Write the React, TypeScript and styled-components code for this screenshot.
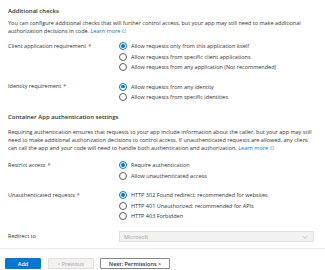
import React from 'react';
import styled, { createGlobalStyle } from 'styled-components';

const GlobalStyle = createGlobalStyle`
  html, body {
    margin: 0;
    padding: 0;
    background: #ffffff;
  }
  body {
    font-family: "Segoe UI", "Open Sans", "Noto Sans", sans-serif;
    font-size: 5.5px;
    color: #323130;
  }
`;

const Page = styled.div`
  width: 325px;
  height: 270px;
  display: flex;
  flex-direction: column;
  overflow: hidden;
`;

const Content = styled.div`
  flex: 1;
  padding: 6px 11px 0 8px;
`;

const SectionTitle = styled.h2<{ $gap?: number }>`
  margin: ${p => p.$gap ?? 0}px 0 0;
  font-size: 6px;
  font-weight: 600;
  line-height: 10px;
`;

const Description = styled.p<{ $top: number; $bottom: number }>`
  margin: ${p => p.$top}px 0 ${p => p.$bottom}px;
  line-height: 8px;
`;

const LearnMore = styled.a`
  color: #0078d4;
  text-decoration: none;
  white-space: nowrap;
`;

const FieldRow = styled.div<{ $gap?: number }>`
  display: grid;
  grid-template-columns: 111px 1fr;
  align-items: start;
  margin-top: ${p => p.$gap ?? 0}px;
`;

const Label = styled.div`
  line-height: 10.5px;
`;

const Required = styled.span`
  color: #a4262c;
  margin-left: 2px;
`;

const RadioGroup = styled.div`
  display: flex;
  flex-direction: column;
`;

const RadioOption = styled.label`
  display: flex;
  align-items: center;
  gap: 4px;
  height: 10.5px;
`;

const RadioCircle = styled.span<{ $checked: boolean }>`
  box-sizing: border-box;
  flex: none;
  width: 8px;
  height: 8px;
  border-radius: 50%;
  border: 0.8px solid ${p => (p.$checked ? '#0078d4' : '#605e5c')};
  display: flex;
  align-items: center;
  justify-content: center;

  &::after {
    content: '';
    display: ${p => (p.$checked ? 'block' : 'none')};
    width: 3.8px;
    height: 3.8px;
    border-radius: 50%;
    background: #0078d4;
  }
`;

const Select = styled.div`
  box-sizing: border-box;
  height: 11px;
  border: 1px solid #e1dfdd;
  background: #f3f2f1;
  color: #a19f9d;
  display: flex;
  align-items: center;
  justify-content: space-between;
  padding: 0 5px 0 4px;
`;

const Footer = styled.div`
  box-sizing: border-box;
  flex: none;
  height: 22px;
  border-top: 1px solid #edebe9;
  padding: 9px 5px 0;
  display: flex;
  gap: 6.5px;
`;

const Button = styled.button<{ $variant: 'primary' | 'disabled' | 'default'; $width: number }>`
  box-sizing: border-box;
  width: ${p => p.$width}px;
  height: 11px;
  padding: 0;
  font-family: inherit;
  font-size: 5.5px;
  border-radius: 1px;
  border: 1px solid
    ${p => (p.$variant === 'primary' ? '#0078d4' : p.$variant === 'disabled' ? '#e1dfdd' : '#8a8886')};
  background: ${p => (p.$variant === 'primary' ? '#0078d4' : p.$variant === 'disabled' ? '#f3f2f1' : '#ffffff')};
  color: ${p => (p.$variant === 'primary' ? '#ffffff' : p.$variant === 'disabled' ? '#a19f9d' : '#323130')};
  font-weight: ${p => (p.$variant === 'disabled' ? 400 : 600)};
`;

const ExternalIcon = () => (
  <svg width="4.5" height="4.5" viewBox="0 0 12 12" style={{ marginLeft: 1.5 }}>
    <path d="M5 2H2v8h8V7M7 1h4v4M11 1L5.5 6.5" fill="none" stroke="#0078d4" strokeWidth="1" />
  </svg>
);

const Chevron = () => (
  <svg width="6" height="4" viewBox="0 0 12 7">
    <path d="M1 1l5 5 5-5" fill="none" stroke="#a19f9d" strokeWidth="1" />
  </svg>
);

type Option = { text: string; checked?: boolean };

const RadioField = ({ label, options, gap }: { label: string; options: Option[]; gap?: number }) => (
  <FieldRow $gap={gap}>
    <Label>
      {label}
      <Required>*</Required>
    </Label>
    <RadioGroup>
      {options.map(o => (
        <RadioOption key={o.text}>
          <RadioCircle $checked={!!o.checked} />
          {o.text}
        </RadioOption>
      ))}
    </RadioGroup>
  </FieldRow>
);

export default function App() {
  return (
    <Page>
      <GlobalStyle />
      <Content>
        <SectionTitle>Additional checks</SectionTitle>
        <Description $top={3} $bottom={5.75}>
          You can configure additional checks that will further control access, but your app may still need to make additional
          authorization decisions in code. <LearnMore>Learn more<ExternalIcon /></LearnMore>
        </Description>

        <RadioField
          label="Client application requirement"
          options={[
            { text: 'Allow requests only from this application itself', checked: true },
            { text: 'Allow requests from specific client applications' },
            { text: 'Allow requests from any application (Not recommended)' },
          ]}
        />
        <RadioField
          gap={9}
          label="Identity requirement"
          options={[
            { text: 'Allow requests from any identity', checked: true },
            { text: 'Allow requests from specific identities' },
          ]}
        />

        <SectionTitle $gap={10}>Container App authentication settings</SectionTitle>
        <Description $top={6} $bottom={7.75}>
          Requiring authentication ensures that requests to your app include information about the caller, but your app may still
          need to make additional authorization decisions to control access. If unauthenticated requests are allowed, any client
          can call the app and your code will need to handle both authentication and authorization.{' '}
          <LearnMore>Learn more<ExternalIcon /></LearnMore>
        </Description>

        <RadioField
          label="Restrict access"
          options={[
            { text: 'Require authentication', checked: true },
            { text: 'Allow unauthenticated access' },
          ]}
        />
        <RadioField
          gap={8.75}
          label="Unauthenticated requests"
          options={[
            { text: 'HTTP 302 Found redirect: recommended for websites', checked: true },
            { text: 'HTTP 401 Unauthorized: recommended for APIs' },
            { text: 'HTTP 403 Forbidden' },
          ]}
        />

        <FieldRow $gap={9.75}>
          <Label>Redirect to</Label>
          <Select>
            Microsoft
            <Chevron />
          </Select>
        </FieldRow>
      </Content>
      <Footer>
        <Button $variant="primary" $width={36}>Add</Button>
        <Button $variant="disabled" $width={46}>&lt; Previous</Button>
        <Button $variant="default" $width={70}>Next: Permissions &gt;</Button>
      </Footer>
    </Page>
  );
}
